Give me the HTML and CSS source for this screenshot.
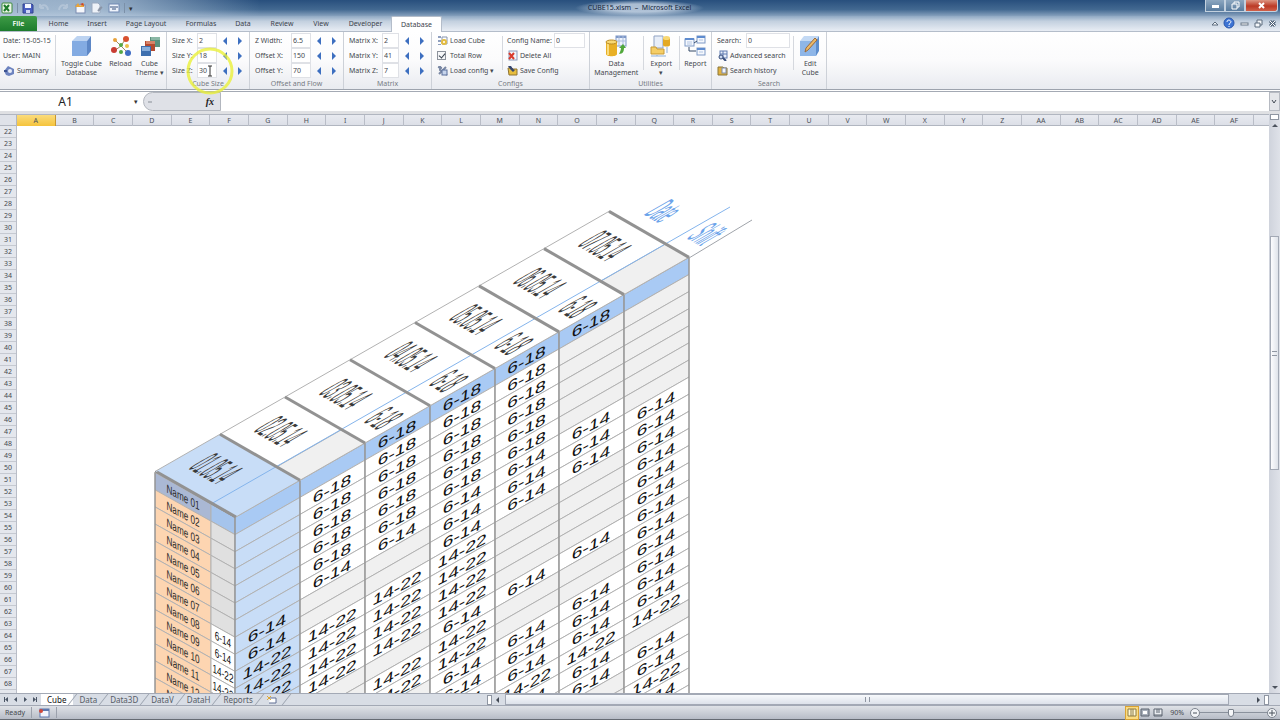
FILE: index.html
```html
<!DOCTYPE html>
<html lang="en">
<head>
<meta charset="utf-8">
<title>CUBE15.xlsm - Microsoft Excel</title>
<link rel="stylesheet" href="styles.css">
</head>
<body>
<div class="app">
  <header class="titlebar">
    <div class="quick">
      <svg width="12" height="12" viewBox="0 0 12 12"><rect x="1" y="1" width="10" height="10" rx="1" fill="#e9f5e6" stroke="#3c8a3c"/><path d="M3 3l5 6M8 3l-5 6" stroke="#1e7b2c" stroke-width="2"/></svg>
      <i class="qsep"></i>
      <svg width="12" height="12" viewBox="0 0 12 12"><path d="M1 2h9l1 1v8H1z" fill="#4a5fc1" stroke="#33448f"/><rect x="3" y="2" width="6" height="4" fill="#f4f6ff"/><rect x="4" y="8" width="4" height="3" fill="#cdd5f5"/></svg>
      <svg class="dim" width="14" height="12" viewBox="0 0 14 12"><path d="M2 6C4 2 9 2 10 8M2 6V2M2 6h4" fill="none" stroke="#c8d4e2" stroke-width="2"/></svg>
      <svg class="dim" width="14" height="12" viewBox="0 0 14 12"><path d="M11 6C9 2 4 2 3 8M11 6V2M11 6H7" fill="none" stroke="#c8d4e2" stroke-width="2"/></svg>
      <svg width="12" height="12" viewBox="0 0 12 12"><rect x="2" y="3" width="9" height="8" fill="#f5f7fb" stroke="#7a8bb0"/><path d="M1 5l3-4 2 3 4-3v4H1z" fill="#e8a43a"/><path d="M6 2l3-1 1 3z" fill="#c9402f"/></svg>
      <svg width="14" height="12" viewBox="0 0 14 12"><path d="M2 1h6l2 2v8H2z" fill="#eef2f8" stroke="#9aa9bf"/><path d="M9 7l3-2M8 9l3-3" stroke="#8a94a5" stroke-width="2"/></svg>
      <svg width="12" height="12" viewBox="0 0 12 12"><rect x="1" y="2" width="10" height="8" fill="#eef3fb" stroke="#7189b3"/><path d="M2 5h8M4 7h4" stroke="#39527f"/></svg>
      <i class="qsep"></i><span class="tri">▾</span>
    </div>
    <div class="title">CUBE15.xlsm&nbsp; –&nbsp; Microsoft Excel</div>
    <div class="winbtns">
      <button aria-label="Minimize"><svg width="18" height="12"><rect x="6" y="5" width="7" height="3" fill="#fff"/></svg></button>
      <button aria-label="Restore"><svg width="18" height="12"><path d="M6 4h5v5H6zM8 4V2h5v5h-2" fill="none" stroke="#fff"/></svg></button>
      <button class="close" aria-label="Close"><svg width="31" height="12"><path d="M13 3l5 5M18 3l-5 5" stroke="#fff" stroke-width="2"/></svg></button>
    </div>
  </header>
  <nav class="tabs">
    <button class="file">File</button>
    <button class="t1">Home</button><button class="t2">Insert</button><button class="t3">Page Layout</button><button class="t4">Formulas</button><button class="t5">Data</button><button class="t6">Review</button><button class="t7">View</button><button class="t8">Developer</button><button class="active">Database</button>
    <span class="grow"></span>
    <svg class="docbtns" width="72" height="15" viewBox="0 0 72 15"><path d="M4 9l3-3 3 3z" fill="#f8fafc" stroke="#5b6b7d"/><circle cx="21" cy="7" r="5" fill="#3d74d4" stroke="#2a57ab"/><path d="M19 6c0-3 4-2 4 0c0 1-2 1-2 3M21 10v1" fill="none" stroke="#fff"/><rect x="33" y="7" width="7" height="2" fill="#fff" stroke="#6a7988"/><path d="M47 7h5v4h-5zM49 7V4h5v5h-2" fill="#f4f7fa" stroke="#5d6d7e"/><path d="M62 5l5 5M67 5l-5 5" stroke="#53657a" stroke-width="3"/><path d="M62 5l5 5M67 5l-5 5" stroke="#fff"/></svg>
  </nav>

  <section class="ribbon">
    <div class="group g-info">
      <div class="body">
        <div class="stack info"><span>Date: 15-05-15</span><span>User: MAIN</span>
          <button class="cmd"><svg width="12" height="11" viewBox="0 0 12 11"><path d="M1 6l4-5 6 3v5l-5 2-3-1z" fill="#6d83bf"/><circle cx="7" cy="6" r="2" fill="#e7ecf8"/><path d="M1 6h3" stroke="#3c5290" stroke-width="2"/></svg>Summary</button></div>
        <i class="sep"></i>
        <button class="big w46"><svg width="22" height="22" viewBox="0 0 22 22"><path d="M1 6l5-5h14l-4 5z" fill="#bcd3f1"/><path d="M1 6h15v15H1z" fill="#83abe2"/><path d="M16 6l4-5v15l-4 5z" fill="#5d87c6"/></svg><span>Toggle Cube<br>Database</span></button>
        <button class="big w29"><svg width="22" height="22" viewBox="0 0 22 22"><path d="M5 5l6 6 5-8M11 11l-7 5M11 11l6 6" stroke="#a08a62" fill="none"/><circle cx="5" cy="5" r="2" fill="#e8a23a"/><circle cx="16" cy="4" r="3" fill="#d8512f"/><circle cx="4" cy="15" r="3" fill="#c83d33"/><circle cx="11" cy="10" r="2" fill="#56a745"/><circle cx="17" cy="11" r="2" fill="#ecc048"/><circle cx="11" cy="17" r="2" fill="#54a645"/><circle cx="18" cy="18" r="3" fill="#3f6cc4"/></svg><span>Reload</span></button>
        <button class="big w29"><svg width="22" height="22" viewBox="0 0 22 22"><rect x="11" y="2" width="10" height="10" fill="#5b917e"/><rect x="12" y="2" width="9" height="3" fill="#8ab7a5"/><rect x="6" y="6" width="10" height="10" fill="#b4492f"/><rect x="7" y="6" width="9" height="3" fill="#d68369"/><rect x="2" y="11" width="10" height="10" fill="#3e6fae"/><rect x="3" y="12" width="8" height="4" fill="#88aedb"/></svg><span>Cube<br>Theme ▾</span></button>
      </div>
    </div>
    <div class="group g-size" data-caption="Cube Size" data-fields="Size X:|2;Size Y:|18;Size Z:|30"></div>
    <div class="group g-offset" data-caption="Offset and Flow" data-fields="Z Width:|6.5;Offset X:|150;Offset Y:|70"></div>
    <div class="group g-matrix" data-caption="Matrix" data-fields="Matrix X:|2;Matrix Y:|41;Matrix Z:|7"></div>
    <div class="group g-configs">
      <div class="body">
        <div class="stack c1">
          <button class="cmd"><svg width="11" height="11" viewBox="0 0 11 11"><path d="M1 1h3v2H1zM1 5h3v2H1zM1 9h3v1H1z" fill="#8f9fbf"/><path d="M5 2h5v7H5z" fill="#fff" stroke="#8795ad"/><circle cx="7" cy="7" r="3" fill="#e3bb3f"/><circle cx="7" cy="7" r="1" fill="#fff"/></svg>Load Cube</button>
          <label class="cmd"><input type="checkbox" checked>Total Row</label>
          <button class="cmd"><svg width="11" height="11" viewBox="0 0 11 11"><path d="M1 2l4 1M3 1v4l7 5M9 2L2 9" stroke="#7a88a4" stroke-width="2" fill="none"/><rect x="5" y="5" width="5" height="5" fill="#c6d4ec" stroke="#586f9c"/></svg>Load config ▾</button>
        </div>
        <i class="sep short"></i>
        <div class="stack c2">
          <label class="cmd">Config Name: <input class="name" value="0"></label>
          <button class="cmd"><svg width="11" height="11" viewBox="0 0 11 11"><rect x="2" y="1" width="8" height="9" fill="#f3f5fb" stroke="#8c9abb"/><path d="M2 3l5 6M7 3L2 9" stroke="#d83b2e" stroke-width="2"/></svg>Delete All</button>
          <button class="cmd"><svg width="11" height="11" viewBox="0 0 11 11"><path d="M1 3h4l1 1h4v6H2z" fill="#e7bd3e" stroke="#8f7432"/><path d="M1 1h3l2 3 2 1-2 2-3-3z" fill="#36466e"/></svg>Save Config</button>
        </div>
      </div>
      <div class="caption">Configs</div>
    </div>
    <div class="group g-util">
      <div class="body">
        <button class="big w52"><svg width="22" height="22" viewBox="0 0 22 22"><rect x="11" y="1" width="10" height="10" fill="#eef3fc" stroke="#7e98c7"/><path d="M11 2h10" stroke="#7e98c7" stroke-width="2"/><path d="M14 1v10M18 1v10M11 6h10" stroke="#a9bcdd"/><path d="M1 7v12c0 3 11 3 11 0V7" fill="#e8af25"/><path d="M3 8v12" stroke="#f9dc7f" stroke-width="2"/><ellipse cx="6.500" cy="7" rx="5.500" ry="2" fill="#f8d873" stroke="#b98a23"/><path d="M14 19c4 0 5-3 5-6h2l-3-4-4 4h2c0 2-1 4-2 6z" fill="#51a83b"/></svg><span>Data<br>Management</span></button>
        <i class="sep short"></i>
        <button class="big w35"><svg width="22" height="22" viewBox="0 0 22 22"><path d="M4 1h9v12H4z" fill="#e8eef8" stroke="#91a3c3"/><path d="M13 3v7c0 2 7 2 7 0V3" fill="#e4a923"/><ellipse cx="16.500" cy="3" rx="3.500" ry="2" fill="#f8d771"/><path d="M1 12h5l1 2h7v5H1z" fill="#f5ce67" stroke="#c79a36"/><path d="M17 12v6M7 20v1M1 21h15" stroke="#8db0da" fill="none"/></svg><span>Export<br>▾</span></button>
        <i class="sep short"></i>
        <button class="big w30"><svg width="22" height="22" viewBox="0 0 22 22"><g fill="#f5f8fd" stroke="#7f9ac6"><rect x="1" y="4" width="9" height="7"/><rect x="13" y="1" width="8" height="7"/><rect x="13" y="13" width="8" height="7"/></g><path d="M1 4h9M13 2h8M13 14h8" stroke="#5f8ccf" stroke-width="2"/><path d="M3 7h5M3 9h5M15 5h4M15 17h4" stroke="#b3c5e2"/><path d="M5 12v4h7M10 8l3-2" stroke="#334967" fill="none"/></svg><span>Report</span></button>
      </div>
      <div class="caption">Utilities</div>
    </div>
    <div class="group g-search">
      <div class="body">
        <div class="stack s1">
          <label class="cmd">Search: <input class="query" value="0"></label>
          <button class="cmd"><svg width="11" height="11" viewBox="0 0 11 11"><rect x="3" y="1" width="7" height="7" fill="#e9effa" stroke="#617db1"/><path d="M3 4h7M6 1v7" stroke="#617db1"/><circle cx="4" cy="7" r="2" fill="#cbd9ef" stroke="#394f7c"/><path d="M6 8l3 3" stroke="#394f7c" stroke-width="2"/></svg>Advanced search</button>
          <button class="cmd"><svg width="11" height="11" viewBox="0 0 11 11"><path d="M1 2h5l1 1h3v7H1z" fill="#e0b140" stroke="#8b7638"/><rect x="5" y="3" width="4" height="5" fill="#f3f5fb" stroke="#7c8cab"/></svg>Search history</button>
        </div>
        <i class="sep short"></i>
        <button class="big w30"><svg width="22" height="22" viewBox="0 0 22 22"><path d="M1 6l4-5h15l-3 5z" fill="#c3d9f4"/><path d="M1 6h16v15H1z" fill="#8eb6e8"/><path d="M17 6l3-5v15l-3 5z" fill="#5d8dcc"/><path d="M6 17l1-4L16 3l2 2-9 10z" fill="#ecb867" stroke="#9a6a3b"/></svg><span>Edit<br>Cube</span></button>
      </div>
      <div class="caption">Search</div>
    </div>
  </section>

  <div class="formula">
    <input class="cellname" value="A1" aria-label="Name box">
    <span class="tri">▾</span>
    <div class="fx"><span class="dot"></span><em>fx</em></div>
    <input class="ftext" aria-label="Formula bar">
    <button class="fexp" aria-label="Expand formula bar"><svg width="9" height="6"><path d="M2 1l2 3 2-3" fill="none" stroke="#444b55"/></svg></button>
  </div>

  <main class="sheet">
    <div class="corner"></div>
    <div class="cols" id="cols"></div>
    <div class="rows" id="rows"></div>
    <div class="canvas"><svg id="cube" width="1000" height="580" role="img" aria-label="Cube"></svg></div>
    <div class="vscroll"><i class="split"></i><span class="up"></span><div class="track"><div class="thumb"><i></i></div></div><span class="down"></span></div>
  </main>

  <footer class="sheettabs">
    <svg width="41" height="11" viewBox="0 0 41 11" fill="#4b5666"><path d="M4 3h1v5H4zM8 3v5L5 5.500zM17 3v5l-3-2.500zM24 3v5l3-2.500zM33 3v5l3-2.500zM36 3h1v5h-1z"/></svg>
    <button class="on">Cube</button><button>Data</button><button>Data3D</button><button>DataV</button><button>DataH</button><button>Reports</button>
    <button class="new" aria-label="Insert sheet"><svg width="12" height="10" viewBox="0 0 12 10"><path d="M4 3h6v5H3" fill="#fff" stroke="#5f6f94"/><path d="M1 1l4 4M5 1L1 5" stroke="#e0aa35"/></svg></button>
    <span class="grow"></span>
    <div class="hscroll"><i class="split"></i><span class="left"></span><div class="hthumb"><i></i></div><span class="right"></span><i class="split"></i></div>
  </footer>

  <footer class="status">
    <span class="ready">Ready</span><i class="sep"></i>
    <svg width="12" height="10" viewBox="0 0 12 10"><rect x="2" y="1" width="9" height="8" fill="#f1f5fd" stroke="#5e78ae"/><path d="M2 2h9" stroke="#5e78ae" stroke-width="2"/><circle cx="3" cy="3" r="2" fill="#d0493a"/></svg>
    <i class="sep"></i><span class="grow"></span>
    <div class="views">
      <button class="sel" aria-label="Normal"><svg width="10" height="9"><path d="M1 1h8v7H1zM4 1v7M6 1v7" fill="#fff8d8" stroke="#8c7a43"/></svg></button>
      <button aria-label="Page layout"><svg width="10" height="9"><path d="M1 1h8v7H1z" fill="#a9b0bb" stroke="#5d6570"/><rect x="3" y="3" width="4" height="3" fill="#fff"/></svg></button>
      <button aria-label="Page break"><svg width="10" height="9"><path d="M1 1h8v7H1z" fill="#e9ecf0" stroke="#5d6570"/><path d="M4 1v4M6 1v4M1 7h8" stroke="#5d6570"/></svg></button>
    </div>
    <span class="pct">90%</span>
    <button class="round" aria-label="Zoom out"><svg width="8" height="8"><path d="M2 4h4" stroke="#4b525d"/></svg></button>
    <input class="zoom" type="range" min="0" max="100" value="46" aria-label="Zoom">
    <button class="round" aria-label="Zoom in"><svg width="8" height="8"><path d="M1 4h6M4 1v6" stroke="#4b525d"/></svg></button>
  </footer>

  <svg class="pointer" width="50" height="50" viewBox="0 0 50 50"><circle cx="25" cy="25" r="22" fill="none" stroke="#eaf03a" stroke-opacity=".8" stroke-width="3"/><path d="M23 20h4M25 20v10M23 30h4" stroke="#333" fill="none"/></svg>
</div>
<script src="app.js"></script>
</body>
</html>
```

FILE: styles.css
```css
* { box-sizing: border-box; }
body { margin: 0; font: 7px/9px "Noto Sans", "Open Sans", sans-serif; color: #45494f; }
button, input { font: inherit; color: inherit; border: 0; background: none; padding: 0; margin: 0; }
button { white-space: nowrap; }
svg { display: block; flex: none; }
.grow { flex: 1; }
.app { position: relative; display: flex; flex-direction: column; height: 100vh; overflow: hidden; background: #fff; }

.titlebar { display: flex; justify-content: space-between; flex: none; height: 16px; background: linear-gradient(#284f7d, #436991 60%, #86a0bd); }
.quick { display: flex; align-items: center; gap: 4px; flex: 1; padding-left: 1px; background: linear-gradient(90deg, rgba(190,208,226,.75) 100px, rgba(190,208,226,0) 260px); }
.quick .dim { opacity: .5; }
.qsep { width: 1px; height: 10px; background: #7b90a8; }
.tri { font-size: 7px; color: #333; }
.title { flex: none; padding: 3px 13px 0; color: #16263b; background: radial-gradient(closest-side, rgba(200,214,230,.8) 50%, rgba(200,214,230,0)); }
.winbtns { flex: 1; display: flex; justify-content: flex-end; align-items: flex-start; padding-right: 2px; }
.winbtns button { border: 1px solid #c2d0de; border-top: 0; background: linear-gradient(#8da7c0, #587b9e); height: 12px; overflow: hidden; }
.winbtns .close { background: linear-gradient(#dc9582, #bb3a26 55%, #d0604a); border-radius: 0 0 3px 0; }

.tabs { display: flex; flex: none; height: 16px; background: linear-gradient(#8fa8c3, #c3d0df 35%, #e8edf4); border-bottom: 1px solid #b4bdca; }
.tabs button { color: #3d444d; }
.tabs .file { width: 37px; background: linear-gradient(#3e9b46, #1d7c2d); color: #fff; border-radius: 2px 2px 0 0; font-weight: 600; }
.t1 { width: 43px; } .t2 { width: 34px; } .t3 { width: 64px; } .t4 { width: 46px; } .t5 { width: 38px; } .t6 { width: 40px; } .t7 { width: 38px; } .t8 { width: 51px; }
.tabs .active { width: 51px; height: 16px; background: #fff; border: 1px solid #b4bdca; border-bottom: 0; border-radius: 2px 2px 0 0; }

.ribbon { display: flex; flex: none; height: 58px; background: linear-gradient(#fff, #fbfbfc 50%, #e9ebf0); border-bottom: 1px solid #9da3ad; }
.group { display: flex; flex-direction: column; border-right: 1px solid #cdd1d8; padding-top: 1px; }
.g-info { width: 167px; } .g-size { width: 83px; } .g-offset { width: 94px; } .g-matrix { width: 88px; } .g-configs { width: 158px; } .g-util { width: 122px; } .g-search { width: 115px; }
.body { display: flex; height: 45px; }
.caption { text-align: center; color: #777c84; padding-top: 1px; }
.stack { display: grid; grid-template-rows: repeat(3, 15px); align-items: center; }
.info { padding-left: 3px; width: 54px; white-space: nowrap; align-content: start; }
.cmd { display: flex; align-items: center; gap: 2px; white-space: nowrap; height: 15px; }
.sep { width: 1px; background: #d5d8de; margin: 2px 1px; flex: none; }
.sep.short { margin: 3px 0 8px; }
.big { display: flex; flex-direction: column; align-items: center; justify-content: flex-start; gap: 2px; padding-top: 2px; line-height: 9px; }
.big span { text-align: center; }
.big svg { margin: 0 auto; }
.w29 { width: 29px; } .w30 { width: 32px; } .w35 { width: 36px; } .w46 { width: 49px; } .w52 { width: 54px; }
.field { display: flex; align-items: center; height: 15px; white-space: nowrap; }
.field label { flex: 1; }
.field input { width: 17px; height: 15px; padding-left: 1px; border: 1px solid #dfe1e6; background: #fff; }
.g-size .field input { width: 20px; }
.g-offset .field input { width: 20px; }
.field button { width: 15px; height: 12px; display: flex; align-items: center; justify-content: center; }
.fields { padding: 0 2px 0 5px; flex: 1; }
.c1 { width: 70px; padding-left: 5px; } .c2 { padding-left: 4px; }
.cmd input[type=checkbox] { width: 9px; height: 9px; margin: 0 2px 0 0; appearance: none; border: 1px solid #8d939c; background: #f6f7f9; position: relative; }
.cmd input[type=checkbox]:checked::after { content: ""; position: absolute; left: 2px; top: 0; width: 3px; height: 5px; border: solid #39434f; border-width: 0 1px 1px 0; transform: rotate(40deg); }
.name, .query { border: 1px solid #dfe1e6; background: #fff; height: 15px; padding-left: 1px; }
.name { width: 31px; } .query { width: 44px; margin-left: 3px; }
.s1 { padding-left: 5px; width: 82px; }

.formula { display: flex; flex: none; align-items: center; height: 23px; margin-top: 1px; background: #fff; border-top: 1px solid #a4aab4; border-bottom: 3px solid #dfe0e3; }
.cellname { width: 134px; height: 19px; padding-right: 3px; font-size: 12px; text-align: center; color: #222; }
.fx { display: flex; align-items: center; justify-content: space-between; width: 78px; height: 19px; margin-left: 5px; padding: 0 6px 0 4px; background: #dfe1e7; border: 1px solid #b2b6be; border-radius: 10px 0 0 10px; }
.fx em { font: italic 700 10px/12px "Liberation Serif", serif; color: #222; }
.dot { width: 4px; height: 2px; background: #b4b8bf; }
.ftext { flex: 1; height: 19px; }
.fexp { width: 11px; height: 19px; background: #e4e6ea; border: 1px solid #b6bac2; }

.sheet { flex: 1; min-height: 0; display: grid; grid-template: 12px minmax(0, 1fr) / 17px minmax(0, 1fr) 11px; }
.corner { background: #dfe2e9; border: solid #b1b6c0; border-width: 1px 1px 1px 0; }
.cols { display: grid; grid-template-columns: repeat(32, minmax(0, 1fr)) 15px; background: linear-gradient(#e8eaf0, #dcdfe7); border: solid #b1b6c0; border-width: 1px 0; line-height: 11px; text-align: center; color: #4b5058; }
.cols span { border-right: 1px solid #b9bdc7; }
.cols .sel { background: linear-gradient(#fbdc7c, #f5c33c); border-color: #c7962f; }
.vscroll { grid-column: 3; grid-row: 1 / 3; display: flex; flex-direction: column; align-items: center; background: linear-gradient(90deg, #cfd3dc, #dfe2e9); }
.rows { grid-column: 1; grid-row: 2; overflow: hidden; background: #e4e7ed; border-right: 1px solid #b9bdc7; text-align: center; }
.rows span { display: block; height: 12px; line-height: 12px; border-bottom: 1px solid #c5c9d1; }
.canvas { grid-column: 2; grid-row: 2; overflow: hidden; background: #fff; }
.vscroll .split { width: 9px; height: 6px; background: #fff; border: 1px solid #8f96a2; }
.up, .down { border: solid transparent; border-width: 0 3px; }
.up { border-bottom: 3px solid #4c535e; margin-top: 4px; }
.down { border-top: 3px solid #4c535e; margin-bottom: 4px; }
.track { flex: 1; width: 100%; padding: 0 1px; display: grid; grid-template-rows: 109fr 234fr 216fr; }
.thumb { grid-row: 2; display: grid; place-items: center; background: linear-gradient(90deg, #fcfcfe, #dfe3ea); border: 1px solid #a3a9b5; }
.thumb i { width: 5px; height: 5px; border: solid #8f96a2; border-width: 1px 0; }

.sheettabs { display: flex; flex: none; align-items: center; height: 12px; background: #d8dde5; border-top: 1px solid #a3a9b5; color: #565c65; }
.sheettabs button { position: relative; height: 11px; padding: 0 7px 0 6px; font-size: 8px; line-height: 10px; }
.sheettabs button::after { content: ""; position: absolute; right: 0; top: 0; height: 11px; border-right: 1px solid #9aa1ad; transform: skewX(-38deg); }
.sheettabs .on { background: #fff; color: #111; }
.sheettabs .new { padding: 0 9px 0 6px; }
.hscroll { display: flex; flex: 0 1 793px; align-items: center; height: 11px; }
.hscroll .split { width: 5px; height: 10px; background: #fff; border: 1px solid #8f96a2; margin-right: 1px; }
.left, .right { border: solid transparent; border-width: 3px 0; }
.left { border-right: 3px solid #434a55; margin: 0 6px 0 3px; }
.right { border-left: 3px solid #434a55; margin: 0 4px 0 28px; }
.hthumb { flex: 1; height: 11px; display: grid; place-items: center; background: linear-gradient(#f7f9fc, #dde2ea); border: 1px solid #a3a9b5; }
.hthumb i { width: 5px; height: 5px; border: solid #8f96a2; border-width: 0 1px; }
.hscroll .split:last-child { margin-right: 11px; }

.status { display: flex; flex: none; align-items: center; height: 15px; background: linear-gradient(#dfe2e7, #b7bcc6); border-top: 1px solid #a3a9b5; border-bottom: 1px solid #666b73; padding-right: 3px; }
.status .sep { height: 11px; background: #9ba1ac; margin: 0 6px; }
.ready { padding-left: 5px; }
.views { display: flex; gap: 1px; }
.views button { height: 12px; padding: 1px; }
.views .sel { background: #fbdc82; outline: 1px solid #d9a334; }
.pct { padding: 0 6px; }
.round { width: 10px; height: 10px; border: 1px solid #7c838e; border-radius: 50%; background: #f2f4f7; }
.zoom { width: 67px; height: 10px; appearance: none; background: linear-gradient(#8a919c, #8a919c) center / 100% 1px no-repeat; }
.zoom::-webkit-slider-thumb { appearance: none; width: 6px; height: 8px; background: #f7f8fa; border: 1px solid #7c838e; border-radius: 1px 1px 3px 3px; }
.pointer { position: absolute; left: 185px; top: 46px; pointer-events: none; }

#cube text { font-family: "Liberation Sans", Arial, sans-serif; text-anchor: middle; fill: #111; }
#cube .shift { font-size: 15px; }
#cube .name-l { font-size: 12px; fill: #2a2a2a; }
#cube .shift-l { font-size: 12px; }
#cube .top { font-size: 10px; fill: #3a3a3a; }
#cube .head { font-size: 10px; fill: #6ba3ea; }
#cube .cell { stroke: #b2b2b2; stroke-width: 1; }
#cube .edge { stroke: #868686; stroke-width: 1; }
#cube .thin { stroke: #a0a4aa; stroke-width: 1; }
#cube .bar { stroke: #929292; stroke-width: 3; }
#cube .guide { stroke: #84b4ec; stroke-width: 1; }
```

FILE: app.js
```js
// Spinner fields in the ribbon
document.querySelectorAll('[data-fields]').forEach(function (g, gi) {
  var rows = g.dataset.fields.split(';').map(function (f, i) {
    var p = f.split('|'), id = 'f' + gi + i;
    return '<div class="field"><label for="' + id + '">' + p[0] + '</label><input id="' + id + '" value="' + p[1] + '">' +
      '<button aria-label="Decrease"><svg width="6" height="8"><path d="M5 0v8L1 4z" fill="#3d6fc0"/></svg></button>' +
      '<button aria-label="Increase"><svg width="6" height="8"><path d="M1 0v8l4-4z" fill="#3d6fc0"/></svg></button></div>';
  }).join('');
  g.innerHTML = '<div class="body"><div class="stack fields">' + rows + '</div></div><div class="caption">' + g.dataset.caption + '</div>';
});

// Column and row headings
var html = '';
for (var i = 0; i < 32; i++) {
  var name = i < 26 ? String.fromCharCode(65 + i) : 'A' + String.fromCharCode(39 + i);
  html += '<span' + (i ? '' : ' class="sel"') + '>' + name + '</span>';
}
document.getElementById('cols').innerHTML = html;
html = '';
for (i = 22; i < 70; i++) html += '<span>' + i + '</span>';
document.getElementById('rows').innerHTML = html;

// Cube: a = 6-18, b = 6-14, c = 14-22, . = empty
var SHIFT = { a: '6-18', b: '6-14', c: '14-22' };
var DATA = [
  '.......bbcccc',
  '.aaaaab..cccc...',
  'aaaaaab..cccc.cc.',
  'aaaaaabbbccccbccbbb',
  'aaaaaabbb....b..bbbcbb',
  'a.....bbb....b..bbbcbb..',
  '.......bbbbbbbbbbbbc.bbcbb'
];
var X = [235, 300, 365, 430, 495, 559, 624, 689];
var PITCH = 17.1, SLOPE = -0.573;
function frontY(x, r) { return 517.5 + (x - 235) * SLOPE + r * PITCH; }
function leftY(x, r) { return 472.7 + (x - 155) * 0.56 + r * PITCH; }
function poly(pts, fill, cls) { return '<polygon points="' + pts.join(' ') + '" fill="' + fill + '" class="' + (cls || 'cell') + '"/>'; }
function line(a, b, c, d, cls) { return '<line x1="' + a + '" y1="' + b + '" x2="' + c + '" y2="' + d + '" class="' + cls + '"/>'; }
function text(m, x, y, cls, s) { return '<text transform="matrix(' + m + ',' + x + ',' + y + ')" class="' + cls + '">' + s + '</text>'; }
var FRONT = '1.28,-0.67,-0.12,1', LEFT = '0.68,0.37,0,1', TOP = '0.73,0.42,-4,2.3';
var out = '';

for (var r = 0; r < 14; r++) {
  [[155, 211], [211, 235]].forEach(function (s, k) {
    var fill = r === 0 ? (k ? '#a5c4ec' : '#aab8d4') : k ? (r < 7 ? '#e0e0e0' : '#fff') : '#fdd5b1';
    out += poly([s[0], leftY(s[0], r), s[1], leftY(s[1], r), s[1], leftY(s[1], r + 1), s[0], leftY(s[0], r + 1)], fill);
  });
  out += text(LEFT, 183, leftY(183, r) + 13, 'name-l', 'Name ' + String(r + 1).padStart(2, '0'));
  if (r > 6) out += text(LEFT, 223, leftY(223, r) + 13, 'shift-l', r < 9 ? '6-14' : '14-22');
}
DATA.forEach(function (col, c) {
  var a = X[c], b = X[c + 1], mid = (a + b) / 2;
  for (var r = 0; r < 27; r++) {
    var k = col[r], fill = r === 0 ? '#a9caf4' : c === 0 ? '#c8ddf7' : SHIFT[k] ? '#fff' : '#f0f0f0';
    out += poly([a, frontY(a, r), b, frontY(b, r), b, frontY(b, r + 1), a, frontY(a, r + 1)], fill);
    if (SHIFT[k]) out += text(FRONT, mid - 1, frontY(mid, r) + 15, 'shift', SHIFT[k]);
  }
});
X.forEach(function (x) { out += line(x, frontY(x, 0), x, 720, 'edge'); });
out += line(155, 472, 155, 720, 'edge');

// Top face
DATA.forEach(function (col, c) {
  var a = X[c], b = X[c + 1], ya = frontY(a, 0), yb = frontY(b, 0);
  out += poly([a, ya, b, yb, b - 80, yb - 46, a - 80, ya - 46], c ? '#fff' : '#c8ddf7');
  if (c === 1 || c === 6) out += poly([a, ya, b, yb, b - 24, yb - 13, a - 24, ya - 13], '#f0f0f0');
});
out += line(211, 504, 730, 207, 'guide');
X.forEach(function (x, i) {
  var y = frontY(x, 0);
  out += line(x - 80, y - 46, x, y, i ? 'bar' : 'edge');
});
out += line(157, 472, 236, 517, 'bar');
out += line(689, 258, 752, 220, 'thin');
DATA.forEach(function (col, c) {
  var a = X[c], y = frontY(a, 0);
  out += text(TOP, a - 33, y - 41, 'top', '0' + (c + 1) + '.05.14');
  if (c > 1 && c < 6) out += text(TOP, a + 5, y - 17, 'top', '6-18');
});
out += text(TOP, 651, 219, 'head', 'Date') + text(TOP, 693, 242, 'head', 'Shift');
document.getElementById('cube').innerHTML = '<g transform="translate(-17,-126)">' + out + '</g>';
```
